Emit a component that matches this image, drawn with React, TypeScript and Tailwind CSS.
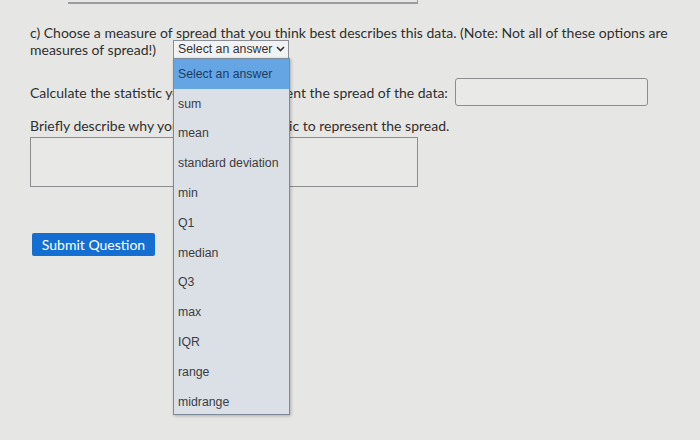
import React from "react";

const options = [
  "sum",
  "mean",
  "standard deviation",
  "min",
  "Q1",
  "median",
  "Q3",
  "max",
  "IQR",
  "range",
  "midrange",
];

export default function App() {
  return (
    <div className="relative w-[700px] h-[440px] overflow-hidden bg-[#e6e7e4] text-[#2f2f30] font-['Lato','Open_Sans',sans-serif]">
      <div className="ml-[68px] w-[350px] h-[4px] border-b-2 border-r border-[#9a9c9d]" />
      <div className="pl-[30px] pt-[21px] pr-[20px]">
        <p className="text-[14px] leading-[16px] whitespace-nowrap">
          c) Choose a measure of spread that you think best describes this data. (Note: Not all of these options are
        </p>
        <div className="flex items-center h-[16px] text-[14px] whitespace-nowrap">
          <span>measures of spread!)</span>
          <div className="ml-[17px] w-[116px] h-[19px] border border-[#8a8f96] bg-[#f0f2f3] flex items-center justify-between pl-[4px] pr-[3px] font-['Liberation_Sans',Arial,sans-serif] text-[12.3px] text-[#333] whitespace-nowrap">
            <span>Select an answer</span>
            <svg width="9" height="6" viewBox="0 0 9 6">
              <path d="M1 1 L4.5 4.5 L8 1" fill="none" stroke="#333" strokeWidth="1.6" />
            </svg>
          </div>
        </div>
        <div className="mt-[21px] flex items-center text-[14px] whitespace-nowrap">
          <span>Calculate the statistic you chose to represent the spread of the data:</span>
          <div className="ml-[7px] w-[193px] h-[28px] border border-[#8b8d8f] rounded-[3px] bg-[#e9eae8]" />
        </div>
        <p className="mt-[12px] text-[14px] leading-[16px] whitespace-nowrap">
          Briefly describe why you chose that statistic to represent the spread.
        </p>
        <div className="mt-[3px] w-[388px] h-[50px] border border-[#8b8d8f] bg-[#e8e9e7]" />
        <button className="mt-[46px] ml-[2px] w-[123px] h-[23px] rounded-[2px] bg-[#156fd2] text-white text-[14px] font-['Lato','Open_Sans',sans-serif]">
          Submit Question
        </button>
      </div>

      <div className="absolute left-[173px] top-[58px] w-[117px] h-[357px] border border-[#7f8a98] bg-[#dbe0e6] font-['Liberation_Sans',Arial,sans-serif] text-[12.3px] text-[#3a3d42] shadow-[1px_1px_3px_rgba(0,0,0,0.25)]">
        <div className="h-[30px] flex items-center pl-[4px] bg-[#65a5e3] text-[#1e3c63] whitespace-nowrap">
          Select an answer
        </div>
        {options.map((o) => (
          <div key={o} className="h-[29.8px] flex items-center pl-[4px] whitespace-nowrap">
            {o}
          </div>
        ))}
      </div>
    </div>
  );
}
